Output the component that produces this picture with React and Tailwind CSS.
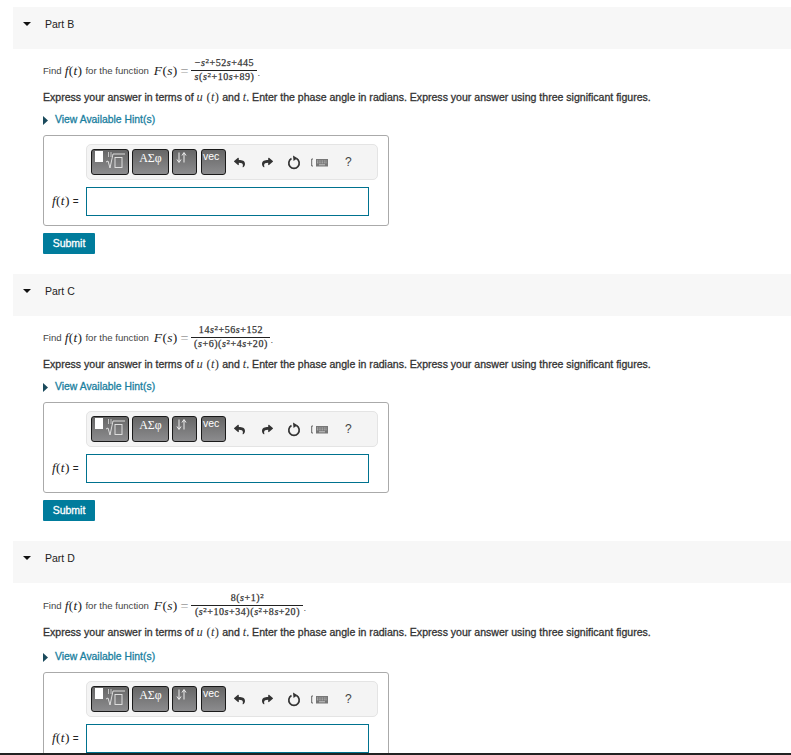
import React from "react";
import { FaReply, FaShare } from "react-icons/fa";

const serif = "font-['Liberation_Serif','DejaVu_Serif',serif]";
const I = ({ children }) => <i>{children}</i>;
const Sup = ({ children }) => <span className="text-[7px] leading-none relative -top-[3px]">{children}</span>;

function Frac({ num, den, w }) {
  return (
    <span className={`inline-flex flex-col items-center -mt-[1px] ${serif} text-[10px] tracking-[0.55px] [-webkit-text-stroke:0.25px_#333] ${w}`}>
      <span className="border-b border-[#222] w-full text-center h-[13px] leading-[10px] whitespace-nowrap text-[#333]">{num}</span>
      <span className="w-full text-center h-[12px] leading-[11px] whitespace-nowrap text-[#333]">{den}</span>
    </span>
  );
}

function Toolbar() {
  const btn = "h-[26px] rounded-[3px] border border-[#1a1a1a] bg-gradient-to-b from-[#666666] to-[#8c8c8e] text-white flex items-start overflow-hidden";
  return (
    <div className="ml-[42px] w-[292px] h-[36px] rounded-[5px] border border-[#e4e4e4] bg-[#f4f4f4] flex items-center pl-[4px]">
      <div className={`${btn} w-[38px] items-center pl-[3px] gap-[2px]`}>
        <span className="w-[8px] h-[11px] bg-white mt-[1px]" />
        <svg width="20" height="22" viewBox="0 0 20 22" fill="none" stroke="#e8e8e8" strokeWidth="0.9">
          <path d="M1 12 L3 11 L5 18 L8 4 H20" />
          <rect x="10" y="7.5" width="7" height="10" />
          <path d="M3.5 2 V7 M6 2 V7" strokeWidth="0.7" />
        </svg>
      </div>
      <div className={`${btn} w-[37px] ml-[3px] justify-center pt-[1px] text-[12px] leading-[14px] ${serif}`}>ΑΣφ</div>
      <div className={`${btn} w-[25px] ml-[3px] justify-start pl-[3px] pt-[2px]`}>
        <svg width="11" height="11" viewBox="0 0 11 11" fill="none" stroke="#f0f0f0" strokeWidth="1">
          <path d="M3 0.5 V10 M1 7.5 L3 10.5 L5 7.5" />
          <path d="M8 10.5 V1 M6 3.5 L8 0.5 L10 3.5" />
        </svg>
      </div>
      <div className={`${btn} w-[25px] ml-[4px] pl-[1px] text-[10.5px] leading-[12px] font-['Liberation_Sans',sans-serif]`}>vec</div>
      <FaReply className="ml-[8px] text-[#333] w-[11px] h-[11px]" />
      <FaShare className="ml-[17px] text-[#333] w-[11px] h-[11px]" />
      <svg className="ml-[14px]" width="14" height="15" viewBox="0 0 14 15" fill="none">
        <path d="M4.5 3.6 A5.2 5.2 0 1 0 9.5 3.6" stroke="#333" strokeWidth="1.7" />
        <path d="M6 0.5 L10.5 3.2 L6.5 6 Z" fill="#333" />
      </svg>
      <svg className="ml-[10px]" width="18" height="9" viewBox="0 0 18 9" fill="none">
        <path d="M2 1 H0.7 V8 H2" stroke="#555" strokeWidth="0.9" />
        <rect x="5" y="1" width="12" height="7.5" fill="#777" />
        <path d="M6 3 H16 M6 4.8 H16" stroke="#ddd" strokeWidth="0.7" strokeDasharray="1 0.7" />
        <path d="M8 6.8 H14" stroke="#ddd" strokeWidth="0.8" />
      </svg>
      <span className="ml-[16px] text-[12px] text-[#444] font-['Liberation_Sans',sans-serif]">?</span>
    </div>
  );
}

function Part({ name, num, den, fw, findTop, hintGap, last }) {
  return (
    <section className={last ? "" : "h-[267px]"}>
      <div className="ml-[13px] h-[42px] bg-[#f7f7f7] flex items-start pl-[10px] pt-[11px]">
        <svg width="8" height="4" viewBox="0 0 8 4" className="mt-[4px]"><path d="M0 0 H8 L4 4 Z" fill="#111" /></svg>
        <span className="ml-[14px] text-[10.5px] leading-[12px] text-[#222]">{name}</span>
      </div>
      <div className="pl-[43px]">
        <div className={`h-[34px] ${findTop} flex items-center text-[#444] text-[9.6px] whitespace-nowrap`}>
          <span>Find</span>
          <span className={`${serif} text-[13.5px] tracking-[0.3px] text-[#222] mx-[3px]`}><I>f</I>(<I>t</I>)</span>
          <span>for the function</span>
          <span className={`${serif} text-[13.5px] tracking-[0.3px] text-[#222] ml-[5px]`}><I>F</I>(<I>s</I>)</span>
          <span className={`${serif} text-[14px] text-[#999] mx-[3px]`}>=</span>
          <Frac num={num} den={den} w={fw} />
          <span className="text-[#555] self-end mb-[8px]">.</span>
        </div>
        <div className="h-[19px] flex items-center text-[10.55px] text-[#333] whitespace-nowrap [-webkit-text-stroke:0.3px_#333]">
          <span>Express your answer in terms of&nbsp;</span>
          <span className={`${serif} text-[12.5px] tracking-[0.3px] [-webkit-text-stroke:0px]`}><I>u</I> (<I>t</I>)</span>
          <span>&nbsp;and&nbsp;</span>
          <span className={`${serif} text-[12.5px] [-webkit-text-stroke:0px]`}><I>t</I></span>
          <span>. Enter the phase angle in radians. Express your answer using three significant figures.</span>
        </div>
        <div className={`flex items-center h-[14px] ${hintGap}`}>
          <svg width="5" height="9" viewBox="0 0 5 9"><path d="M0 0 L5 4.5 L0 9 Z" fill="#1a4a5c" /></svg>
          <span className="ml-[7px] text-[10.4px] text-[#1b7f9f] [-webkit-text-stroke:0.3px_#1b7f9f]">View Available Hint(s)</span>
        </div>
        <div className="mt-[8px] w-[346px] h-[91px] rounded-[3px] border border-[#aaaaaa] bg-white pt-[8px]">
          <Toolbar />
          <div className="flex items-center mt-[7px] pl-[8px]">
            <span className={`${serif} text-[13.5px] tracking-[0.3px] text-[#222] w-[34px] whitespace-nowrap`}>
              <I>f</I>(<I>t</I>)<span className="font-['Liberation_Sans',sans-serif] text-[10px]"> =</span>
            </span>
            <div className="w-[283px] h-[29px] border border-[#00728f] bg-white" />
          </div>
        </div>
        {!last && (
          <button className="block mt-[7px] w-[52px] h-[21px] rounded-[1px] bg-[#007c9c] text-white text-[10.5px] [-webkit-text-stroke:0.3px_#fff]">Submit</button>
        )}
      </div>
    </section>
  );
}

export default function App() {
  return (
    <div className="relative h-[755px] w-[791px] overflow-hidden bg-white pt-[7px] font-['Liberation_Sans',Arial,sans-serif]">
      <Part name="Part B" fw="w-[66px]" findTop="mt-[5px]" hintGap="mt-[6px]"
        num={<>−<I>s</I><Sup>2</Sup>+52<I>s</I>+445</>}
        den={<><I>s</I>(<I>s</I><Sup>2</Sup>+10<I>s</I>+89)</>} />
      <Part name="Part C" fw="w-[79px]" findTop="mt-[5px]" hintGap="mt-[6px]"
        num={<>14<I>s</I><Sup>2</Sup>+56<I>s</I>+152</>}
        den={<>(<I>s</I>+6)(<I>s</I><Sup>2</Sup>+4<I>s</I>+20)</>} />
      <Part name="Part D" fw="w-[112px]" findTop="mt-[6px]" hintGap="mt-[8px]" last
        num={<>8(<I>s</I>+1)<Sup>2</Sup></>}
        den={<>(<I>s</I><Sup>2</Sup>+10<I>s</I>+34)(<I>s</I><Sup>2</Sup>+8<I>s</I>+20)</>} />
      <div className="absolute left-0 right-0 bottom-0 h-[2px] bg-[#222]" />
    </div>
  );
}
